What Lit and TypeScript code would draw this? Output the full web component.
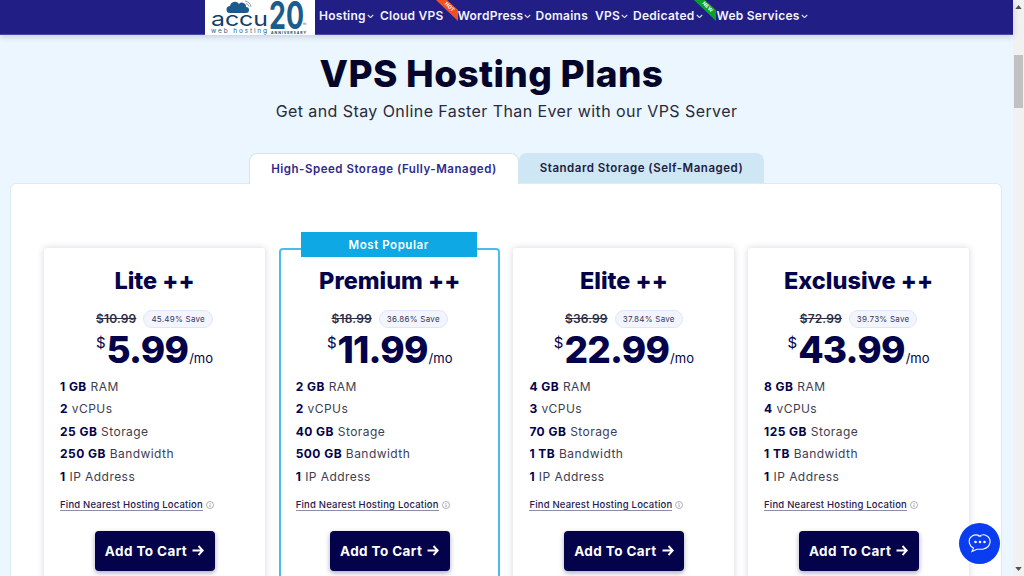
import { LitElement, html, css, svg } from 'lit';
import { customElement } from 'lit/decorators.js';

interface Plan {
  name: string;
  old: string;
  save: string;
  price: string;
  specs: [string, string][];
  popular?: boolean;
}

const plans: Plan[] = [
  {
    name: 'Lite ++', old: '$10.99', save: '45.49% Save', price: '5.99',
    specs: [['1 GB', 'RAM'], ['2', 'vCPUs'], ['25 GB', 'Storage'], ['250 GB', 'Bandwidth'], ['1', 'IP Address']],
  },
  {
    name: 'Premium ++', old: '$18.99', save: '36.86% Save', price: '11.99', popular: true,
    specs: [['2 GB', 'RAM'], ['2', 'vCPUs'], ['40 GB', 'Storage'], ['500 GB', 'Bandwidth'], ['1', 'IP Address']],
  },
  {
    name: 'Elite ++', old: '$36.99', save: '37.84% Save', price: '22.99',
    specs: [['4 GB', 'RAM'], ['3', 'vCPUs'], ['70 GB', 'Storage'], ['1 TB', 'Bandwidth'], ['1', 'IP Address']],
  },
  {
    name: 'Exclusive ++', old: '$72.99', save: '39.73% Save', price: '43.99',
    specs: [['8 GB', 'RAM'], ['4', 'vCPUs'], ['125 GB', 'Storage'], ['1 TB', 'Bandwidth'], ['1', 'IP Address']],
  },
];

const navItems = [
  { label: 'Hosting', caret: true, gap: 6 },
  { label: 'Cloud VPS', ribbon: 'HOT', gap: 13 },
  { label: 'WordPress', caret: true, gap: 4 },
  { label: 'Domains', gap: 7 },
  { label: 'VPS', caret: true, gap: 5 },
  { label: 'Dedicated', caret: true, ribbon: 'NEW', gap: 14 },
  { label: 'Web Services', caret: true, gap: 0 },
];

const caret = svg`<svg class="caret" width="7" height="5" viewBox="0 0 7 5"><path d="M.8 1l2.7 2.6L6.2 1" fill="none" stroke="currentColor" stroke-width="1.1"/></svg>`;

@customElement('app-root')
export class AppRoot extends LitElement {
  static styles = css`
    :host {
      display: flex;
      width: 1024px;
      height: 576px;
      overflow: hidden;
      position: relative;
      font-family: Inter, 'Noto Sans', sans-serif;
      color: #03024a;
    }

    .page {
      flex: 1;
      min-width: 0;
      background: #ebf6fe;
      display: flex;
      flex-direction: column;
    }

    nav {
      height: 35px;
      flex: none;
      background: #211e86;
      border-bottom: 1px solid #4a48a0;
      box-sizing: border-box;
      box-shadow: 0 2px 6px rgba(30, 40, 90, 0.18);
      display: flex;
      padding-left: 205px;
      position: relative;
      z-index: 1;
    }

    .logo {
      display: block;
      flex: none;
      margin-right: 4px;
      background: #fff;
    }

    .links {
      display: flex;
      align-items: center;
      height: 30px;
    }

    .link {
      display: flex;
      align-items: center;
      gap: 1px;
      font-size: 12px;
      font-weight: 600;
      letter-spacing: 0.26px;
      color: #f2f3fb;
      white-space: nowrap;
      position: relative;
    }

    .caret {
      color: #e6e6f5;
      margin-top: 2px;
    }

    .ribbon {
      position: absolute;
      top: -8px;
      right: -13px;
      width: 22px;
      height: 21px;
    }

    .ribbon svg {
      display: block;
    }

    main {
      flex: 1;
      min-height: 0;
      overflow: hidden;
      display: flex;
      flex-direction: column;
      align-items: center;
    }

    h1 {
      margin: 19px 30px 0 0;
      font-size: 37px;
      line-height: 40px;
      font-weight: 800;
      letter-spacing: 0.35px;
      color: #05052b;
    }

    .sub {
      margin: 7px 0 0;
      font-size: 16px;
      line-height: 20px;
      letter-spacing: 0.42px;
      color: #2a2a3c;
    }

    .tabs {
      display: flex;
      margin-top: 32px;
      align-self: flex-start;
      margin-left: 249px;
    }

    .tab {
      height: 30px;
      box-sizing: border-box;
      padding-top: 8px;
      font-size: 11.5px;
      font-weight: 600;
      letter-spacing: 0.52px;
      text-align: center;
      border-radius: 8px 8px 0 0;
    }

    .tab.on {
      width: 270px;
      background: #fff;
      border: 1px solid #d4e6f3;
      border-bottom: 0;
      color: #2d2a8c;
      position: relative;
      z-index: 1;
      height: 31px;
      margin-bottom: -1px;
    }

    .tab.off {
      width: 245px;
      background: #cfe6f4;
      color: #1d2140;
    }

    .panel {
      width: 992px;
      flex: 1;
      box-sizing: border-box;
      align-self: flex-start;
      margin-left: 10px;
      background: #fff;
      border: 1px solid #dcebf6;
      border-bottom: 0;
      border-radius: 6px 6px 0 0;
      padding: 64px 33px 0;
      display: grid;
      grid-template-columns: repeat(4, 221px);
      gap: 13.7px;
      align-content: start;
    }

    .card {
      height: 360px;
      box-sizing: border-box;
      background: #fff;
      border-radius: 3px;
      box-shadow: 0 0 7px rgba(40, 50, 90, 0.2);
      padding: 19px 16px 0;
      position: relative;
    }

    .card.popular {
      box-shadow: none;
      border: 2px solid #4cbcea;
      padding: 17px 14px 0 15px;
      border-radius: 4px;
    }

    .flag {
      position: absolute;
      left: 20px;
      top: -18px;
      width: 176px;
      height: 25px;
      background: #0ea8e4;
      color: #fff;
      font-size: 11.5px;
      font-weight: 600;
      line-height: 27px;
      text-align: center;
      letter-spacing: 0.55px;
    }

    h2 {
      margin: 0;
      font-size: 23.5px;
      line-height: 28px;
      font-weight: 800;
      text-align: center;
      color: #03024a;
    }

    .was {
      margin-top: 14px;
      display: flex;
      justify-content: center;
      align-items: center;
      gap: 7px;
      height: 19px;
    }

    .old {
      font-size: 12px;
      font-weight: 600;
      letter-spacing: 0.15px;
      color: #2c2c44;
      text-decoration: line-through;
    }

    .save {
      height: 18px;
      box-sizing: border-box;
      padding: 0 7px;
      border: 1px solid #e0e5fb;
      background: #f3f5fe;
      border-radius: 9px;
      font-size: 8px;
      line-height: 16px;
      letter-spacing: 0.25px;
      color: #35355c;
    }

    .price {
      margin-top: 2px;
      display: flex;
      justify-content: center;
      align-items: baseline;
      height: 40px;
      line-height: 40px;
    }

    .cur {
      font-size: 15px;
      align-self: flex-start;
      line-height: 26px;
      margin-right: 1px;
    }

    .amount {
      font-size: 37px;
      font-weight: 800;
      letter-spacing: -0.8px;
    }

    .mo {
      font-size: 13px;
      margin-left: 1px;
    }

    ul {
      list-style: none;
      margin: 5.5px 0 0;
      padding: 0;
    }

    li {
      height: 22.5px;
      line-height: 22.5px;
      font-size: 12px;
      letter-spacing: 0.45px;
      color: #3d3d52;
    }

    li b {
      font-weight: 700;
      color: #03024a;
    }

    .where {
      margin-top: 10px;
      display: flex;
      align-items: center;
      gap: 3px;
      height: 14px;
      font-size: 9.5px;
      font-weight: 500;
      letter-spacing: 0.2px;
      color: #1f2050;
      white-space: nowrap;
    }

    .where span {
      border-bottom: 1px solid #8d8da8;
    }

    .where svg {
      flex: none;
    }

    .cart {
      display: flex;
      justify-content: center;
      align-items: center;
      gap: 5px;
      width: 120px;
      height: 40px;
      margin: 18.5px auto 0;
      border: 0;
      border-radius: 4px;
      background: #03024a;
      color: #fff;
      font: 700 13.5px Inter, 'Noto Sans', sans-serif;
      letter-spacing: 0.4px;
      box-shadow: 0 2px 5px rgba(10, 10, 70, 0.35);
    }

    .scroll {
      width: 11px;
      flex: none;
      background: #f1f1f1;
      position: relative;
    }

    .scroll i {
      position: absolute;
      left: 1px;
      top: 55px;
      width: 9px;
      height: 53px;
      background: #c1c1c1;
    }

    .scroll svg {
      position: absolute;
      left: 2px;
    }

    .chat {
      position: absolute;
      left: 959px;
      top: 523px;
      width: 41px;
      height: 41px;
      border-radius: 50%;
      background: #0a3cf0;
      display: flex;
      align-items: center;
      justify-content: center;
    }
  `;

  private renderCard(p: Plan) {
    return html`
      <article class="card ${p.popular ? 'popular' : ''}">
        ${p.popular ? html`<div class="flag">Most Popular</div>` : ''}
        <h2>${p.name}</h2>
        <div class="was">
          <span class="old">${p.old}</span>
          <span class="save">${p.save}</span>
        </div>
        <div class="price">
          <span class="cur">$</span>
          <span class="amount">${p.price}</span>
          <span class="mo">/mo</span>
        </div>
        <ul>
          ${p.specs.map(([a, b]) => html`<li><b>${a}</b> ${b}</li>`)}
        </ul>
        <div class="where">
          <span>Find Nearest Hosting Location</span>
          <svg width="8" height="8" viewBox="0 0 8 8">
            <circle cx="4" cy="4" r="3.5" fill="none" stroke="#8b8ba0" stroke-width=".7" />
            <path d="M4 3.4v2.6M4 2v.8" stroke="#8b8ba0" stroke-width=".8" />
          </svg>
        </div>
        <button class="cart">
          Add To Cart
          <svg width="12" height="11" viewBox="0 0 12 11">
            <path d="M.5 5.5h10M6.5 1l4.3 4.5-4.300 4.500" fill="none" stroke="#fff" stroke-width="1.900" />
          </svg>
        </button>
      </article>
    `;
  }

  private renderRibbon(text: string) {
    const fill = text === 'HOT' ? '#f0521f' : '#0aa02c';
    return html`<span class="ribbon">
      <svg width="22" height="21" viewBox="0 0 22 21">
        <path d="M0 0H11L22 10V21Z" fill=${fill} />
        <text x="12.500" y="8" font-size="5" font-weight="700" fill="#fff" text-anchor="middle"
          transform="rotate(45 12.500 8)">${text}</text>
      </svg>
    </span>`;
  }

  private renderLogo() {
    return html`<svg class="logo" width="110" height="35" viewBox="0 0 110 35">
      <path d="M25 13a3.500 3.500 0 0 1 0-7 5 5 0 0 1 9-2 4 4 0 0 1 7 3 3 3 0 0 1 0 6Z" fill="#1b5a8a" />
      <path d="M40 1a7 7 0 0 1 6 6M41 3.500a4 4 0 0 1 3 3" fill="none" stroke="#7d95a8" stroke-width=".9" />
      <text x="6" y="26" font-size="20" textLength="57" lengthAdjust="spacingAndGlyphs" fill="#123f66">accu</text>
      <text x="6" y="33" font-size="6.500" textLength="56" fill="#2a6187">web hosting</text>
      <text x="64" y="29" font-size="38" font-weight="700" textLength="35" lengthAdjust="spacingAndGlyphs" fill="#1a5c8c">20</text>
      <text x="98" y="25" font-size="3.500" fill="#123f66">th</text>
      <text x="66" y="33.500" font-size="3.500" font-weight="700" textLength="35" fill="#123f66">ANNIVERSARY</text>
    </svg>`;
  }

  render() {
    return html`
      <div class="page">
        <nav>
          ${this.renderLogo()}
          <div class="links">
            ${navItems.map(
              (n) => html`<div class="link" style="margin-right:${n.gap}px">
                ${n.label}${n.caret ? caret : ''}${n.ribbon ? this.renderRibbon(n.ribbon) : ''}
              </div>`,
            )}
          </div>
        </nav>
        <main>
          <h1>VPS Hosting Plans</h1>
          <p class="sub">Get and Stay Online Faster Than Ever with our VPS Server</p>
          <div class="tabs">
            <div class="tab on">High-Speed Storage (Fully-Managed)</div>
            <div class="tab off">Standard Storage (Self-Managed)</div>
          </div>
          <section class="panel">${plans.map((p) => this.renderCard(p))}</section>
        </main>
      </div>
      <div class="scroll">
        <svg style="top:5px" width="7" height="4" viewBox="0 0 8 5"><path d="M4 0l4 5H0Z" fill="#505050" /></svg>
        <i></i>
        <svg style="top:567px" width="7" height="4" viewBox="0 0 8 5"><path d="M4 5l4-5H0Z" fill="#505050" /></svg>
      </div>
      <div class="chat">
        <svg width="26" height="24" viewBox="0 0 26 24">
          <path d="M13 4.200C10.500 2.600 7.500 2.500 5.200 4 2.600 5.700 1.700 8.700 2.500 11.500c.6 2 2 3.700 4 4.500l-1.500 3.500 5-2.300c1 .1 2 .1 3 0 1 .1 2.500.1 3.500-.2 3-.8 5.500-2.700 6.300-5.500.8-2.800-.2-5.800-2.800-7.500-2.300-1.500-5.500-1.400-7.500.2Z"
            fill="none" stroke="#fff" stroke-width="1.100" />
          <circle cx="8.500" cy="10" r="1.300" fill="#fff" />
          <circle cx="13" cy="10" r="1.300" fill="#fff" />
          <circle cx="17.500" cy="10" r="1.300" fill="#fff" />
        </svg>
      </div>
    `;
  }
}
